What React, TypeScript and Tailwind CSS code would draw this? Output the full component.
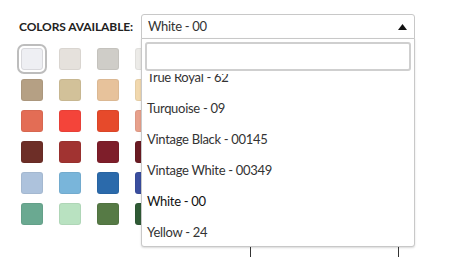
const swatches = [
  ["#eeeff3", "#e5e1dc", "#cfcdc8", "#ecebe8", "#d9d6d0"],
  ["#b5a084", "#d2c199", "#e7c29b", "#f1d8ae", "#c9a47a"],
  ["#e36d55", "#f4443a", "#e64a2b", "#e8a18c", "#d6533c"],
  ["#6d2e27", "#a13331", "#7e1e2a", "#6a1b23", "#4a2224"],
  ["#adc2dc", "#79b5da", "#2b6aab", "#3a4e9f", "#1f3a6a"],
  ["#6aa991", "#b9e2c1", "#567a45", "#2f5a35", "#3d6a5a"],
];

const options = [
  "True Royal - 62",
  "Turquoise - 09",
  "Vintage Black - 00145",
  "Vintage White - 00349",
  "White - 00",
  "Yellow - 24",
];

export default function App() {
  return (
    <div className="relative h-[257px] w-[474px] overflow-hidden bg-white font-['Lato',sans-serif] text-[#333]">
      <div className="flex items-center pl-[19px] pt-[14px]">
        <span className="w-[122px] whitespace-nowrap text-[12px] font-bold tracking-[-0.1px] text-[#222]">
          COLORS AVAILABLE:
        </span>
        <div className="relative text-[13px] tracking-[-0.3px]">
          <div className="flex h-[25px] w-[274px] items-center justify-between rounded-t-[3px] border border-[#c8c8c8] pl-[6px] pr-[7px]">
            <span>White - 00</span>
            <svg width="9" height="6" viewBox="0 0 9 6">
              <path d="M4.5 0L9 6H0z" fill="#111" />
            </svg>
          </div>
          <div className="absolute left-0 top-[24px] z-10 w-[274px] rounded-b-[3px] border border-[#c8c8c8] bg-white px-[3px] pt-[3px] shadow-[0_1px_2px_rgba(0,0,0,0.15)]">
            <div className="mb-[3px] h-[29px] w-full rounded-[3px] border-2 border-[#cfcfcf]" />
            <div className="h-[172px] overflow-hidden">
              <ul className="mt-[-12px]">
                {options.map((o) => (
                  <li
                    key={o}
                    className={`flex h-[31px] items-center pl-[2px] ${
                      o === "White - 00" ? "text-[#111]" : "text-[#333]"
                    }`}
                  >
                    {o}
                  </li>
                ))}
              </ul>
            </div>
          </div>
        </div>
      </div>
      <div className="mt-[9px] flex flex-col gap-[9px] pl-[21px]">
        {swatches.map((row, r) => (
          <div key={r} className="flex gap-[16px]">
            {row.map((c, i) => (
              <div
                key={i}
                className={
                  r === 0 && i === 0
                    ? "h-[22px] w-[22px] rounded-[3px] outline outline-2 outline-offset-[2px] outline-[#bdbdbd] border border-[#d8d8dc]"
                    : "h-[22px] w-[22px] rounded-[3px] border border-black/5"
                }
                style={{ backgroundColor: c }}
              />
            ))}
          </div>
        ))}
      </div>
      <div className="ml-[250px] mt-[-25px] h-[60px] w-[149px] border border-[#333]" />
    </div>
  );
}
